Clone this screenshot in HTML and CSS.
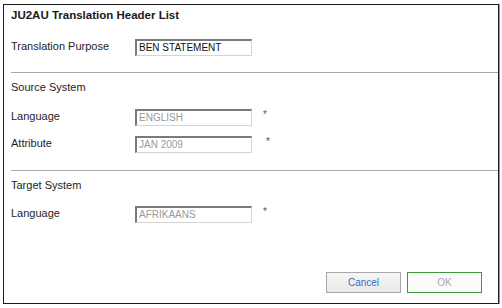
FILE: index.html
```html
<!DOCTYPE html>
<html>
<head>
<meta charset="utf-8">
<link rel="stylesheet" href="styles.css">
</head>
<body>
<div class="dialog">
  <div class="title">JU2AU Translation Header List</div>
  <div class="row r1">
    <span class="label">Translation Purpose</span>
    <div class="field">BEN STATEMENT</div>
  </div>
  <div class="sep s1"></div>
  <div class="section">Source System</div>
  <div class="row r2">
    <span class="label">Language</span>
    <div class="field disabled">ENGLISH</div>
    <span class="req">*</span>
  </div>
  <div class="row r3">
    <span class="label">Attribute</span>
    <div class="field disabled">JAN 2009</div>
    <span class="req req2">*</span>
  </div>
  <div class="sep s2"></div>
  <div class="section">Target System</div>
  <div class="row r4">
    <span class="label">Language</span>
    <div class="field disabled">AFRIKAANS</div>
    <span class="req">*</span>
  </div>
  <div class="footer">
    <button class="btn cancel">Cancel</button>
    <button class="btn ok">OK</button>
  </div>
</div>
</body>
</html>
```

FILE: styles.css
```css
html, body {
  margin: 0;
  padding: 0;
  background: #ffffff;
}
body {
  font-family: "Liberation Sans", Arial, sans-serif;
  color: #1e1e1e;
}
.dialog {
  margin: 4px 0 0 3px;
  width: 496px;
  height: 300px;
  box-sizing: border-box;
  border: 1px solid #1c1c1c;
  box-shadow: 1px 0 0 #9a9a9a;
}
.title {
  margin: 2px 0 0 7px;
  font-size: 11.5px;
  font-weight: bold;
  line-height: 16px;
  color: #1a1a1a;
}
.row {
  display: flex;
  align-items: center;
  margin-left: 7px;
  height: 17px;
}
.r1 { margin-top: 16px; }
.r2 { margin-top: 14px; }
.r3 { margin-top: 10px; }
.r4 { margin-top: 13px; }
.label {
  width: 124px;
  font-size: 11px;
  line-height: 14px;
  padding-bottom: 3px;
  color: #1e1e1e;
}
.field {
  width: 117px;
  height: 17px;
  box-sizing: border-box;
  border-top: 2px solid #7a7a7a;
  border-left: 2px solid #7a7a7a;
  border-right: 1px solid #d4d4d4;
  border-bottom: 1px solid #d4d4d4;
  padding-left: 2px;
  font-size: 10px;
  line-height: 14px;
  color: #111;
  background: #fff;
}
.field.disabled {
  color: #9a9a9a;
}
.req {
  margin-left: 11px;
  font-size: 10px;
  line-height: 10px;
  padding-bottom: 6px;
  color: #555;
}
.req2 { margin-left: 14px; }
.sep {
  height: 1px;
  background: #a8a8a8;
  margin-left: 7px;
}
.s1 { margin-top: 16px; }
.s2 { margin-top: 17px; }
.section {
  margin: 6px 0 0 7px;
  font-size: 11px;
  line-height: 16px;
  color: #1e1e1e;
}
.footer {
  display: flex;
  justify-content: flex-end;
  gap: 6px;
  margin: 49px 16px 0 0;
}
.btn {
  width: 75px;
  height: 21px;
  box-sizing: border-box;
  font-family: "Liberation Sans", Arial, sans-serif;
  font-size: 10px;
  padding: 0;
  margin: 0;
}
.cancel {
  border: 1px solid #a9a9a9;
  background: linear-gradient(#f6f6f6, #e8e8e8);
  color: #3a70b8;
}
.ok {
  border: 1px solid #3a9a3a;
  background: #fbfbfb;
  color: #a8a8a8;
}
```
